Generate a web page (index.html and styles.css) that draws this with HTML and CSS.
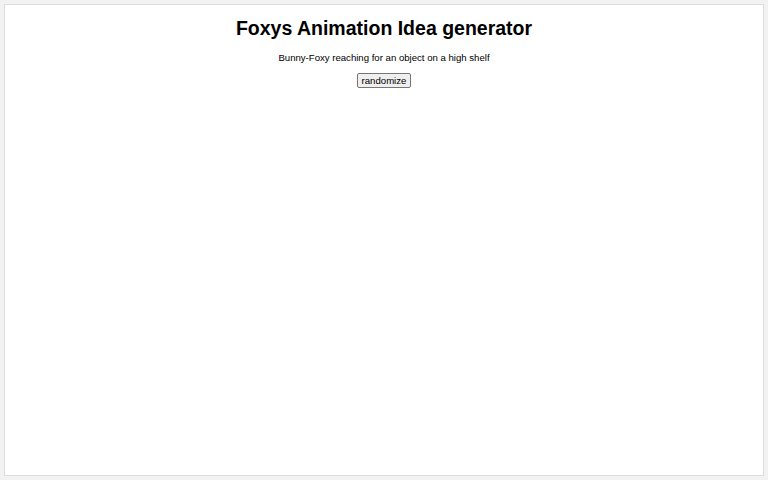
FILE: index.html
```
<!DOCTYPE html>
<html>
<head>
<meta charset="utf-8">
<link rel="stylesheet" href="styles.css">
</head>
<body>
<div class="panel">
  <h1 class="title">Foxys Animation Idea generator</h1>
  <p class="idea">Bunny-Foxy reaching for an object on a high shelf</p>
  <button class="btn">randomize</button>
</div>
</body>
</html>
```
FILE: styles.css
```
html, body {
  margin: 0;
  height: 100%;
}
body {
  background: #f2f2f2;
  padding: 4px;
  box-sizing: border-box;
  font-family: "Liberation Sans", Arial, sans-serif;
}
.panel {
  background: #fff;
  border: 1px solid #dcdcdc;
  height: 100%;
  box-sizing: border-box;
  display: flex;
  flex-direction: column;
  align-items: center;
}
.title {
  font-size: 19.5px;
  font-weight: bold;
  margin: 12px 0 0;
  line-height: 23px;
  color: #000;
}
.idea {
  font-size: 9.6px;
  margin: 12px 0 0;
  line-height: 12px;
  color: #000;
}
.btn {
  margin-top: 9px;
  font-family: "Liberation Sans", Arial, sans-serif;
  font-size: 9.6px;
  line-height: 11px;
  padding: 1px 4px;
  background: #efefef;
  border: 1px solid #767676;
  border-radius: 2px;
  color: #000;
}
```
